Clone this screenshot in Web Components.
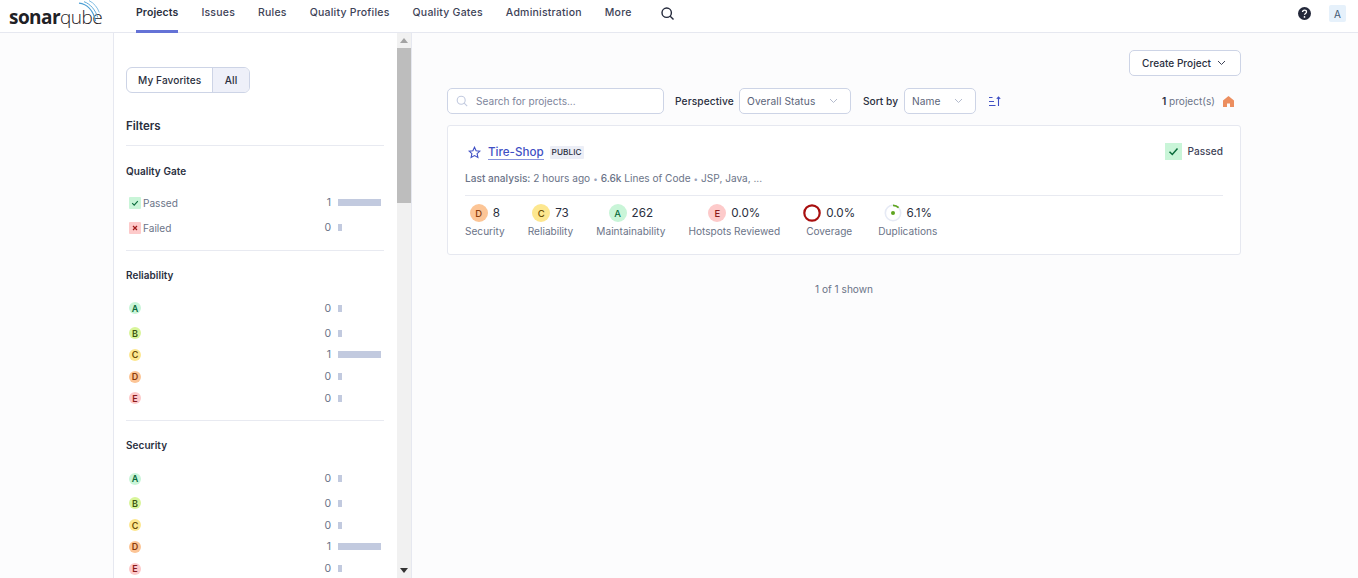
<!DOCTYPE html>
<html lang="en"><head><meta charset="utf-8"><title>Projects - SonarQube</title>
<style>
html,body{margin:0;padding:0;height:100%;overflow:hidden;background:#fcfcfd}
body{font-family:Inter,"Noto Sans",sans-serif;font-size:10px;color:#2a2f40}
</style></head><body>
<sq-app>
  <sq-header slot="header"></sq-header>
  <sq-sidebar slot="side">
    <sq-toggle></sq-toggle>
    <sq-filters-title>Filters</sq-filters-title>
    <sq-facet title="Quality Gate">
      <sq-row count="1"><sq-status kind="ok"></sq-status><span>Passed</span></sq-row>
      <sq-row count="0"><sq-status kind="err"></sq-status><span>Failed</span></sq-row>
    </sq-facet>
    <sq-facet title="Reliability">
      <sq-row count="0"><sq-rating v="A"></sq-rating></sq-row>
      <sq-row count="0"><sq-rating v="B"></sq-rating></sq-row>
      <sq-row count="1" flush><sq-rating v="C"></sq-rating></sq-row>
      <sq-row count="0" flush><sq-rating v="D"></sq-rating></sq-row>
      <sq-row count="0" flush><sq-rating v="E"></sq-rating></sq-row>
    </sq-facet>
    <sq-facet title="Security">
      <sq-row count="0"><sq-rating v="A"></sq-rating></sq-row>
      <sq-row count="0"><sq-rating v="B"></sq-rating></sq-row>
      <sq-row count="0" flush><sq-rating v="C"></sq-rating></sq-row>
      <sq-row count="1" flush><sq-rating v="D"></sq-rating></sq-row>
      <sq-row count="0" flush><sq-rating v="E"></sq-rating></sq-row>
    </sq-facet>
  </sq-sidebar>
  <sq-main slot="main">
    <sq-card>
      <sq-measure label="Security" value="8"><sq-rating v="D" size="18"></sq-rating></sq-measure>
      <sq-measure label="Reliability" value="73"><sq-rating v="C" size="18"></sq-rating></sq-measure>
      <sq-measure label="Maintainability" value="262"><sq-rating v="A" size="18"></sq-rating></sq-measure>
      <sq-measure label="Hotspots Reviewed" value="0.0%"><sq-rating v="E" size="18"></sq-rating></sq-measure>
      <sq-measure label="Coverage" value="0.0%"><svg width="18" height="18" viewBox="0 0 18 18"><circle cx="9" cy="9" r="7.7" fill="none" stroke="#a80f0f" stroke-width="2.2"/></svg></sq-measure>
      <sq-measure label="Duplications" value="6.1%"><svg width="18" height="18" viewBox="0 0 18 18"><circle cx="9" cy="9" r="7.7" fill="none" stroke="#e6eaf5" stroke-width="1.6"/><path d="M9 1.3A7.7 7.7 0 0 1 14.6 3.7" fill="none" stroke="#5fa51f" stroke-width="1.8"/><circle cx="9" cy="9" r="2" fill="#5fa51f"/></svg></sq-measure>
    </sq-card>
  </sq-main>
</sq-app>
<script>
const sheet = (css, html) => `<style>${css}</style>${html}`;
const def = (name, render) => customElements.define(name, class extends HTMLElement {
  connectedCallback(){ if(!this.shadowRoot) this.attachShadow({mode:'open'}).innerHTML = render(this); }
});
const CHEV = c => `<svg width="9" height="6" viewBox="0 0 9 6" fill="none"><path d="M1 1l3.5 3.5L8 1" stroke="${c}" stroke-width="1"/></svg>`;

def('sq-app', () => sheet(`
  :host{display:flex;flex-direction:column;height:578px;overflow:hidden}
  .body{display:flex;flex:1;min-height:0}
  .gutter{width:113px;flex:none}
`, `<slot name="header"></slot><div class="body"><div class="gutter"></div><slot name="side"></slot><slot name="main"></slot></div>`));

def('sq-header', () => sheet(`
  :host{display:flex;align-items:stretch;height:32px;background:#fff;border-bottom:1px solid #e6e8f0;flex:none}
  .logo{width:136px;flex:none;display:flex;align-items:flex-start;position:relative;box-sizing:border-box;padding:6px 0 0 9px}
  .wm{font:400 19px/22px "Open Sans",sans-serif;letter-spacing:-.55px;color:#1f2125}
  .wm b{font-weight:700}.wm i{font-style:normal;font-weight:300}
  .logo svg{position:absolute;left:77px;top:0}
  nav{display:flex;gap:23px;flex:1}
  a{display:block;font-weight:500;font-size:10.500px;letter-spacing:.22px;line-height:25px;color:#3e4357;box-sizing:border-box;height:33px;border-bottom:3px solid transparent}
  a.on{color:#2a2f40;font-weight:600;border-bottom-color:#6472d6;letter-spacing:.1px}
  .s{margin:6px 0 0 5px;display:block}
  .r{display:flex;align-items:flex-start;gap:18px;padding:5px 12px 0 0}
  .help{margin-top:2px;display:block}
  .av{width:17px;height:17px;border-radius:2px;background:#e6f1fb;color:#3e5670;font-size:10px;display:flex;align-items:center;justify-content:center}
`, `<div class="logo"><span class="wm"><b>sonar</b><i>qube</i></span>
  <svg width="24" height="24" viewBox="0 0 24 24" fill="none" stroke="#4b9fd5"><path d="M2 3.200C10 4 16.200 10.500 18.500 21" stroke-width="1.300"/><path d="M7 1.700C13.500 4 18.500 10 20.700 17.500" stroke-width=".9"/><path d="M12 .6C17 3 20.500 7.500 22.300 12.500" stroke-width=".7"/></svg></div>
  <nav><a class="on">Projects</a><a>Issues</a><a>Rules</a><a>Quality Profiles</a><a>Quality Gates</a><a>Administration</a><a>More</a>
  <svg class="s" width="15" height="15" viewBox="0 0 15 15" fill="none" stroke="#23283a" stroke-width="1.400"><circle cx="6.700" cy="6.700" r="4.700"/><path d="M10.200 10.200l3.300 3.300"/></svg></nav>
  <div class="r"><svg class="help" width="13" height="13" viewBox="0 0 13 13"><circle cx="6.500" cy="6.500" r="6.500" fill="#23283a"/><path d="M4.500 5.100c0-1.200.9-1.900 2-1.900s2 .7 2 1.700c0 1.500-2 1.500-2 2.900" fill="none" stroke="#fff" stroke-width="1.300"/><circle cx="6.500" cy="9.900" r=".85" fill="#fff"/></svg><div class="av">A</div></div>`));

def('sq-sidebar', () => sheet(`
  :host{display:flex;width:299px;flex:none;background:#fff;border:solid #e6e8f0;border-width:0 1px;box-sizing:border-box;height:100%;overflow:hidden}
  .c{width:258px;margin-left:12px;flex:none;padding-top:34px;box-sizing:border-box}
  sq-scrollbar{margin-left:auto}
`, `<div class="c"><slot></slot></div><sq-scrollbar></sq-scrollbar>`));

def('sq-scrollbar', () => sheet(`
  :host{display:flex;flex-direction:column;width:14px;flex:none;background:#f1f1f1;height:100%}
  .u{height:15px;display:flex;align-items:center;justify-content:center;flex:none}
  .t{height:155px;background:#bdbdbd;flex:none}
  .sp{flex:1}
`, `<div class="u"><svg width="8" height="5" viewBox="0 0 8 5"><path d="M4 0l4 5H0z" fill="#a3a3a3"/></svg></div><div class="t"></div><div class="sp"></div><div class="u"><svg width="8" height="5" viewBox="0 0 8 5"><path d="M0 0h8L4 5z" fill="#333"/></svg></div>`));

def('sq-toggle', () => sheet(`
  :host{display:inline-flex;height:26px;box-sizing:border-box;border:1px solid #cdd4e6;border-radius:6px;overflow:hidden;font-weight:500;font-size:10.100px;letter-spacing:.1px;color:#2a2f40;background:#fff}
  div{display:flex;align-items:center;padding:0 11px}
  .a{background:#eef0f9;border-left:1px solid #cdd4e6;padding:0 11.500px}
`, `<div>My Favorites</div><div class="a">All</div>`));

def('sq-filters-title', () => sheet(`
  :host{display:block;font-weight:600;font-size:11.500px;line-height:16px;margin-top:25px;padding-bottom:11px;border-bottom:1px solid #e8eaf1;color:#2a2f40}
`, `<slot></slot>`));

def('sq-facet', el => sheet(`
  :host{display:block;padding:16.400px 0 10.500px;border-bottom:1px solid #e8eaf1}
  :host(:first-of-type){padding:17px 0 11px}
  :host(:first-of-type) h3{margin-bottom:13px}
  :host(:last-child){border-bottom:0}
  h3{margin:0 0 14.600px;font-weight:600;font-size:10px;letter-spacing:.05px;line-height:16px;color:#2a2f40}
`, `<h3>${el.getAttribute('title')}</h3><slot></slot>`));

def('sq-row', el => { const n = el.getAttribute('count'); return sheet(`
  :host{display:flex;align-items:center;height:21.750px;margin-top:3px;padding-left:3px;color:#6b7488;font-size:10.100px}
  :host([flush]){margin-top:0}
  :host(:first-of-type){margin-top:0}
  ::slotted(span){margin-left:2px}
  .n{margin-left:auto;width:20px;text-align:right;font-size:10.500px}
  .b{margin:0 3px 0 7px;width:43px;display:flex}
  .b i{display:block;height:7px;background:#c2cadf;width:${n==='1'?'43px':'4px'}}
`, `<slot></slot><span class="n">${n}</span><span class="b"><i></i></span>`); });

const RATING = {A:['#c9f5d8','#0a6b3b'],B:['#d8f59a','#3d5510'],C:['#fde78f','#6b4e07'],D:['#fcc596','#8a3b0b'],E:['#fdcaca','#8a1c1c']};
def('sq-rating', el => { const v = el.getAttribute('v'), s = +(el.getAttribute('size')||12), [bg,fg] = RATING[v]; return sheet(`
  :host{display:inline-flex;align-items:center;justify-content:center;width:${s}px;height:${s}px;border-radius:50%;background:${bg};color:${fg};font-size:${s>12?9.500:9}px;font-weight:${s>12?500:600};flex:none}
`, v); });

def('sq-status', el => { const ok = el.getAttribute('kind')==='ok'; return sheet(`
  :host{display:inline-flex;align-items:center;justify-content:center;width:12px;height:12px;border-radius:1px;background:${ok?'#c9f5d8':'#fdcaca'};flex:none}
`, ok ? `<svg width="8" height="8" viewBox="0 0 8 8" fill="none"><path d="M1.200 4.200l2 2 3.600-4" stroke="#0a6b3b" stroke-width="1.100"/></svg>`
      : `<svg width="8" height="8" viewBox="0 0 8 8" fill="none"><path d="M2 2l4 4M6 2L2 6" stroke="#a01818" stroke-width="1.200"/></svg>`); });

def('sq-select', el => sheet(`
  :host{display:flex;align-items:center;height:26px;box-sizing:border-box;border:1px solid #cdd4e6;border-radius:5px;background:#fff;padding:0 12px 0 7px;width:${el.getAttribute('w')}px;color:#5b6479;font-size:10.200px;letter-spacing:.1px}
  svg{margin-left:auto}
`, `${el.getAttribute('v')}${CHEV('#b4bbcd')}`));

def('sq-main', () => sheet(`
  :host{display:block;flex:1;min-width:0;box-sizing:border-box;padding:17px 117px 0 35px}
  .top{display:flex;justify-content:flex-end}
  .btn{display:flex;align-items:center;gap:6px;height:26px;width:112px;box-sizing:border-box;justify-content:center;border:1px solid #cdd4e6;border-radius:5px;background:#fff;font-weight:500;font-size:10.100px;color:#2a2f40;padding-right:2px}
  .tb{display:flex;align-items:center;height:26px;margin:12px 0 11px}
  .search{width:217px;height:26px;box-sizing:border-box;border:1px solid #cdd4e6;border-radius:5px;background:#fff;display:flex;align-items:center;gap:8px;padding-left:8px;color:#7d859c;font-size:10.100px}
  .l{font-weight:500;font-size:10.200px;letter-spacing:.1px;color:#2a2f40}
  .count{margin-left:auto;display:flex;align-items:center;gap:8px;color:#6b7488;font-size:10.100px;padding-right:7px}
  .count b{font-weight:600;color:#2a2f40}
  .shown{text-align:center;color:#6b7488;font-size:10.100px;margin-top:27px;line-height:14px}
`, `<div class="top"><div class="btn">Create Project ${CHEV('#3e4357')}</div></div>
  <div class="tb">
    <div class="search"><svg width="12" height="12" viewBox="0 0 12 12" fill="none" stroke="#c2cadf" stroke-width="1.100"><circle cx="5.200" cy="5.200" r="4"/><path d="M8.200 8.200l3 3"/></svg>Search for projects...</div>
    <span class="l" style="margin:0 6px 0 11px;width:58px;white-space:nowrap">Perspective</span><sq-select w="112" v="Overall Status"></sq-select>
    <span class="l" style="margin:0 6px 0 12px;width:35px;letter-spacing:0;white-space:nowrap">Sort by</span><sq-select w="72" v="Name"></sq-select>
    <svg style="margin-left:13px" width="12" height="11" viewBox="0 0 12 11" fill="none" stroke="#3f4fc4" stroke-width="1.100"><path d="M0 1.500h3.500M0 5.500h5M0 9.500h6.500M9.500 10V1M7.800 2.800L9.500 1l1.700 1.800"/></svg>
    <span class="count"><span><b>1</b> project(s)</span><svg width="11" height="11" viewBox="0 0 11 11"><path d="M5.500 0L11 4.500V11H7V7.500H4V11H0V4.500z" fill="#ec8e5f"/></svg></span>
  </div>
  <slot></slot>
  <div class="shown">1 of 1 shown</div>`));

def('sq-card', () => sheet(`
  :host{display:block;height:130px;box-sizing:border-box;background:#fff;border:1px solid #e6e8f0;border-radius:3px;padding:15px 17px 0}
  .h{display:flex;align-items:center;height:22px}
  .star{margin:0 7px 0 3px;display:block}
  .t{font-size:11.600px;font-weight:500;color:#3f4fc4;border-bottom:1px solid #8893dd;line-height:14px}
  .pub{margin-left:6px;background:#eceef6;color:#2a2f40;font-size:8.200px;font-weight:500;padding:1px 2px;letter-spacing:.1px;line-height:11px;border-radius:1px}
  .st{margin-left:auto;margin-bottom:2px;display:flex;align-items:center;gap:5.500px;font-weight:500;font-size:10.100px;letter-spacing:.05px;color:#3e4357}
  .ico{width:17px;height:17px;background:#c9f5d8;display:flex;align-items:center;justify-content:center}
  .meta{color:#6b7488;font-size:10.100px;line-height:14px;margin-top:8px;padding-bottom:9px;border-bottom:1px solid #e8eaf1}
  .meta b{font-weight:500}.dot{font-size:8px;color:#9aa3ba;margin:0 3px}
  .m{display:flex;gap:23.100px;margin-top:8px}
`, `<div class="h"><svg class="star" width="13" height="13" viewBox="0 0 13 13" fill="none" stroke="#3f4fc4" stroke-width="1.100"><path d="M6.500 1.200l1.600 3.500 3.800.4-2.800 2.600.8 3.800-3.400-1.900-3.400 1.900.8-3.800L1.100 5.100l3.800-.4z"/></svg><span class="t">Tire-Shop</span><span class="pub">PUBLIC</span>
  <span class="st"><span class="ico"><svg width="11" height="11" viewBox="0 0 11 11" fill="none"><path d="M1.500 5.700l2.800 2.800 5.200-6" stroke="#0a6b3b" stroke-width="1.500"/></svg></span>Passed</span></div>
  <div class="meta"><b>Last analysis:</b> 2 hours ago<span class="dot">•</span><b>6.6k</b> Lines of Code<span class="dot">•</span>JSP, Java, ...</div>
  <div class="m"><slot></slot></div>`));

def('sq-measure', el => sheet(`
  :host{display:flex;flex-direction:column;align-items:center}
  .top{display:flex;align-items:center;gap:5px;height:18px;font-size:11.700px;color:#2a2f40}
  .lab{color:#6b7488;font-size:10.100px;line-height:14px;margin-top:2px;white-space:nowrap}
`, `<div class="top"><slot></slot><span>${el.getAttribute('value')}</span></div><div class="lab">${el.getAttribute('label')}</div>`));
</script>
</body></html>
